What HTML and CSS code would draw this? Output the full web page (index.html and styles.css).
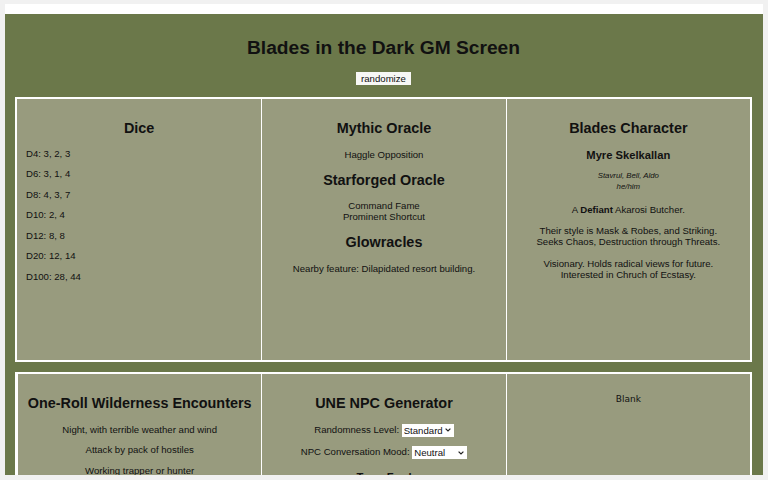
FILE: index.html
```html
<!DOCTYPE html>
<html lang="en">
<head>
<meta charset="utf-8">
<title>Blades in the Dark GM Screen</title>
<link rel="stylesheet" href="styles.css">
</head>
<body>
<div class="topbar"></div>
<main class="screen">
  <h1 class="title">Blades in the Dark GM Screen</h1>
  <div class="actions"><button class="btn" type="button">randomize</button></div>

  <section class="row">
    <div class="cell cell-left">
      <h2 class="head">Dice</h2>
      <p class="txt">D4: 3, 2, 3</p>
      <p class="txt">D6: 3, 1, 4</p>
      <p class="txt">D8: 4, 3, 7</p>
      <p class="txt">D10: 2, 4</p>
      <p class="txt">D12: 8, 8</p>
      <p class="txt">D20: 12, 14</p>
      <p class="txt">D100: 28, 44</p>
    </div>
    <div class="cell">
      <h2 class="head">Mythic Oracle</h2>
      <p class="txt">Haggle Opposition</p>
      <h2 class="head">Starforged Oracle</h2>
      <p class="txt">Command Fame<br>Prominent Shortcut</p>
      <h2 class="head">Glowracles</h2>
      <p class="txt">Nearby feature: Dilapidated resort building.</p>
    </div>
    <div class="cell cell-char">
      <h2 class="head">Blades Character</h2>
      <h3 class="sub">Myre Skelkallan</h3>
      <p class="txt meta"><em>Stavrul, Bell, Aldo<br>he/him</em></p>
      <p class="txt">A <b>Defiant</b> Akarosi Butcher.</p>
      <p class="txt">Their style is Mask &amp; Robes, and Striking.<br>Seeks Chaos, Destruction through Threats.</p>
      <p class="txt">Visionary. Holds radical views for future.<br>Interested in Chruch of Ecstasy.</p>
    </div>
  </section>

  <section class="row row2">
    <div class="cell">
      <h2 class="head">One-Roll Wilderness Encounters</h2>
      <p class="txt">Night, with terrible weather and wind</p>
      <p class="txt">Attack by pack of hostiles</p>
      <p class="txt">Working trapper or hunter</p>
    </div>
    <div class="cell">
      <h2 class="head">UNE NPC Generator</h2>
      <p class="txt">Randomness Level: <select class="sel sel-a"><option>Standard</option></select></p>
      <p class="txt">NPC Conversation Mood: <select class="sel sel-b"><option>Neutral</option></select></p>
      <h3 class="sub">Terry Ford</h3>
    </div>
    <div class="cell">
      <p class="blank">Blank</p>
    </div>
  </section>
</main>
<div class="frame-bottom"></div>
</body>
</html>
```
FILE: styles.css
```css
html, body {
  margin: 0;
}
body {
  background: #f1f1f1;
  padding: 4px 5px 0;
  font-family: "Liberation Sans", Arial, sans-serif;
  font-size: 9.6px;
  color: #111;
}
.topbar {
  height: 10px;
  background: #fff;
}
.screen {
  background: #6b784a;
  padding: 10px 11px 10px 10px;
}
.title {
  font-size: 19.2px;
  font-weight: bold;
  text-align: center;
  margin: 13px 0 13px;
  line-height: 22px;
}
.actions {
  text-align: center;
  margin-bottom: 11px;
  height: 14px;
}
.btn {
  font-family: "Liberation Sans", Arial, sans-serif;
  font-size: 9.6px;
  color: #111;
  background: #f7f7f5;
  border: 0;
  padding: 1px 5px;
  height: 13px;
  line-height: 11px;
  vertical-align: top;
}
.row {
  display: grid;
  grid-template-columns: repeat(3, 1fr);
  border: 2px solid #fff;
  height: 265px;
  box-sizing: border-box;
  background: #989b7e;
}
.row2 {
  margin-top: 10px;
}
.cell {
  padding: 0 9px;
  text-align: center;
  border-left: 1px solid #fff;
  display: flow-root;
}
.cell-left {
  border-left: 0;
}
.cell-left .txt {
  text-align: left;
}
.cell > :first-child {
  margin-top: 21px;
}
.head {
  font-size: 14.4px;
  font-weight: bold;
  margin: 12px 0;
  line-height: 16.5px;
}
.cell-left .head {
  margin-bottom: 11px;
}
.sub {
  font-size: 11.2px;
  font-weight: bold;
  margin: 12px 0 8px;
  line-height: 13px;
}
.txt {
  margin: 9.6px 0;
  line-height: 11px;
}
.cell-char .txt {
  margin: 10.6px 0;
}
.cell-char .meta {
  font-size: 7.8px;
  margin: 8px 0 12px;
}
.sel {
  -webkit-appearance: none;
  appearance: none;
  font-family: "Liberation Sans", Arial, sans-serif;
  font-size: 9.6px;
  color: #111;
  background-color: #fff;
  background-image: url("data:image/svg+xml,%3Csvg xmlns='http://www.w3.org/2000/svg' width='6' height='4' viewBox='0 0 6 4'%3E%3Cpath d='M0.6 0.6 L3 3 L5.4 0.6' fill='none' stroke='%23222' stroke-width='1.2'/%3E%3C/svg%3E");
  background-repeat: no-repeat;
  background-position: right 3px center;
  background-size: 6px 4px;
  border: 0;
  border-radius: 0;
  height: 13px;
  line-height: 13px;
  padding: 0 10px 0 2px;
  vertical-align: middle;
}
.sel-a {
  width: 52px;
}
.sel-b {
  width: 55px;
}
.cell > .blank {
  font-family: "DejaVu Sans", sans-serif;
  font-size: 9px;
  margin: 20px 0 0;
  line-height: 11px;
}
.frame-bottom {
  position: fixed;
  left: 0;
  right: 0;
  bottom: 0;
  height: 5px;
  background: #f1f1f1;
}
```
